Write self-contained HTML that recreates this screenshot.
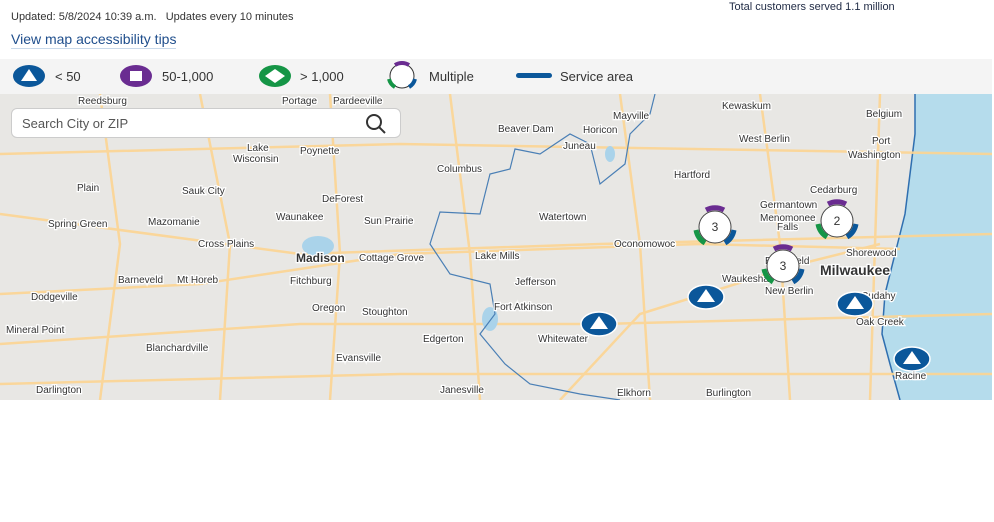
<!DOCTYPE html>
<html><head><meta charset="utf-8"><style>
body{margin:0;width:994px;height:522px;background:#fff;font-family:"Liberation Sans",sans-serif;position:relative;overflow:hidden}
.t{position:absolute;white-space:nowrap}
</style></head><body>
<div class="t" style="left:11px;top:11px;font-size:11px;color:#333">Updated: 5/8/2024 10:39 a.m. &nbsp;&nbsp;Updates every 10 minutes</div>
<div class="t" style="left:729px;top:1px;font-size:11px;color:#1f2a44">Total customers served 1.1 million</div>
<div class="t" style="left:11px;top:31px;font-size:14px;color:#1f4e8c;border-bottom:1px solid #c9d9ea;padding-bottom:1px">View map accessibility tips</div>
<div style="position:absolute;left:0;top:59px;width:992px;height:35px;background:#f4f4f4"></div>
<svg style="position:absolute;left:0;top:59px" width="700" height="35">
<ellipse cx="29" cy="17" rx="16" ry="11" fill="#0b579a"/><polygon points="29,10 37,22 21,22" fill="#fff"/>
<ellipse cx="136" cy="17" rx="16" ry="11" fill="#6a2c91"/><rect x="130" y="12" width="12" height="10" fill="#fff"/>
<ellipse cx="275" cy="17" rx="16" ry="11" fill="#159546"/><polygon points="275,10 285,17 275,24 265,17" fill="#fff"/>
<circle cx="402" cy="17" r="12" fill="#fff" stroke="#333" stroke-width="1"/>
<path d="M395,6 A13,13 0 0 1 409,6" stroke="#6a2c91" stroke-width="4" fill="none"/>
<path d="M389,20 A13,13 0 0 0 395,28" stroke="#159546" stroke-width="4" fill="none"/>
<path d="M409,28 A13,13 0 0 0 415,20" stroke="#0b579a" stroke-width="4" fill="none"/>
<rect x="516" y="14" width="36" height="5" rx="2.5" fill="#0b579a"/>
<g font-family="Liberation Sans" font-size="13" fill="#333"><text x="55" y="22">&lt; 50</text><text x="162" y="22">50-1,000</text><text x="300" y="22">&gt; 1,000</text><text x="429" y="22">Multiple</text><text x="560" y="22">Service area</text></g>
</svg>
<svg style="position:absolute;left:0;top:94px" width="992" height="306" font-family="Liberation Sans">
<defs><g id="m">
<circle cx="0" cy="0" r="16" fill="#fff" stroke="#444"/>
<path d="M-9,-17 A19,19 0 0 1 9,-17" stroke="#6a2c91" stroke-width="5" fill="none"/>
<path d="M-19,3 A19,19 0 0 0 -10,16" stroke="#159546" stroke-width="5" fill="none"/>
<path d="M10,16 A19,19 0 0 0 19,3" stroke="#0b579a" stroke-width="5" fill="none"/>
</g></defs>
<rect width="992" height="306" fill="#e8e7e4"/>
<path d="M915,0 L915,40 910,80 905,120 895,160 885,200 882,240 890,270 900,306 L992,306 992,0Z" fill="#b5dcec"/>
<path d="M915,0 L915,40 910,80 905,120 895,160 885,200 882,240 890,270 900,306" stroke="#2f6fb0" stroke-width="1.5" fill="none"/>
<g stroke="#fcd592" stroke-width="2.5" fill="none" opacity=".9">
<path d="M0,120 L300,160 600,150 992,140"/><path d="M0,200 L200,190 400,160 700,150 900,155"/>
<path d="M330,0 L340,160 330,306"/><path d="M620,0 L640,150 650,306"/><path d="M880,0 L875,150 870,306"/>
<path d="M0,250 L300,230 600,230 992,220"/><path d="M100,0 L120,150 100,306"/><path d="M760,0 L780,150 790,306"/>
<path d="M450,0 L470,160 480,306"/><path d="M200,0 L230,150 220,306"/><path d="M0,60 L400,50 992,60"/>
<path d="M560,306 L640,220 800,170 880,150"/><path d="M0,290 L400,280 992,280"/>
</g>
<g fill="#aad3ea"><ellipse cx="318" cy="152" rx="16" ry="10"/><ellipse cx="490" cy="225" rx="8" ry="12"/><ellipse cx="610" cy="60" rx="5" ry="8"/></g>
<path d="M655,0 L650,20 630,40 625,70 600,90 590,50 570,40 540,60 515,55 510,75 490,80 480,120 440,118 430,150 450,180 490,190 495,220 480,240 505,270 530,290 580,300 620,306" stroke="#4a7fb5" stroke-width="1.2" fill="none"/>
<g font-size="10" fill="#333" stroke="#fff" stroke-width="2.5" paint-order="stroke">
<text x="78" y="10">Reedsburg</text><text x="282" y="10">Portage</text><text x="333" y="10">Pardeeville</text><text x="722" y="15">Kewaskum</text><text x="866" y="23">Belgium</text>
<text x="613" y="25">Mayville</text><text x="498" y="38">Beaver Dam</text><text x="583" y="39">Horicon</text><text x="739" y="48">West Berlin</text><text x="872" y="50">Port</text><text x="848" y="64">Washington</text>
<text x="247" y="57">Lake</text><text x="233" y="68">Wisconsin</text><text x="300" y="60">Poynette</text><text x="563" y="55">Juneau</text><text x="437" y="78">Columbus</text><text x="674" y="84">Hartford</text><text x="810" y="99">Cedarburg</text>
<text x="77" y="97">Plain</text><text x="182" y="100">Sauk City</text><text x="322" y="108">DeForest</text><text x="760" y="114">Germantown</text><text x="760" y="127">Menomonee</text><text x="777" y="136">Falls</text>
<text x="48" y="133">Spring Green</text><text x="148" y="131">Mazomanie</text><text x="276" y="126">Waunakee</text><text x="364" y="130">Sun Prairie</text><text x="539" y="126">Watertown</text><text x="614" y="153">Oconomowoc</text>
<text x="198" y="153">Cross Plains</text><text x="359" y="167">Cottage Grove</text><text x="475" y="165">Lake Mills</text><text x="846" y="162">Shorewood</text><text x="765" y="170">Brookfield</text><text x="722" y="188">Waukesha</text><text x="765" y="200">New Berlin</text>
<text x="118" y="189">Barneveld</text><text x="177" y="189">Mt Horeb</text><text x="290" y="190">Fitchburg</text><text x="515" y="191">Jefferson</text><text x="861" y="205">Cudahy</text>
<text x="31" y="206">Dodgeville</text><text x="312" y="217">Oregon</text><text x="362" y="221">Stoughton</text><text x="494" y="216">Fort Atkinson</text><text x="856" y="231">Oak Creek</text>
<text x="6" y="239">Mineral Point</text><text x="146" y="257">Blanchardville</text><text x="423" y="248">Edgerton</text><text x="538" y="248">Whitewater</text><text x="336" y="267">Evansville</text><text x="895" y="285">Racine</text>
<text x="36" y="299">Darlington</text><text x="440" y="299">Janesville</text><text x="617" y="302">Elkhorn</text><text x="706" y="302">Burlington</text>
<text x="296" y="168" font-size="12" font-weight="bold">Madison</text><text x="820" y="181" font-size="14" font-weight="bold">Milwaukee</text>
</g>
<g fill="#0b579a" stroke="#fff" stroke-width="1.5">
<ellipse cx="706" cy="203" rx="18" ry="12"/><ellipse cx="599" cy="230" rx="18" ry="12"/><ellipse cx="855" cy="210" rx="18" ry="12"/><ellipse cx="912" cy="265" rx="18" ry="12"/></g>
<g fill="#fff"><polygon points="706,195 715,208 697,208"/><polygon points="599,222 608,235 590,235"/><polygon points="855,202 864,215 846,215"/><polygon points="912,257 921,270 903,270"/></g>
<use href="#m" x="715" y="133"/><use href="#m" x="837" y="127"/><use href="#m" x="783" y="172"/>
<g font-size="12" fill="#333" text-anchor="middle"><text x="715" y="137">3</text><text x="837" y="131">2</text><text x="783" y="176">3</text></g>
</svg>
<div style="position:absolute;left:11px;top:108px;width:390px;height:30px;background:#fff;border:1px solid #ccc;border-radius:6px;box-sizing:border-box"></div>
<div class="t" style="left:22px;top:116px;font-size:13px;color:#555">Search City or ZIP</div>
<svg style="position:absolute;left:364px;top:113px" width="24" height="22"><circle cx="10" cy="9" r="7" stroke="#333" stroke-width="2" fill="none"/><line x1="15" y1="14" x2="21" y2="20" stroke="#333" stroke-width="2"/></svg>
</body></html>
